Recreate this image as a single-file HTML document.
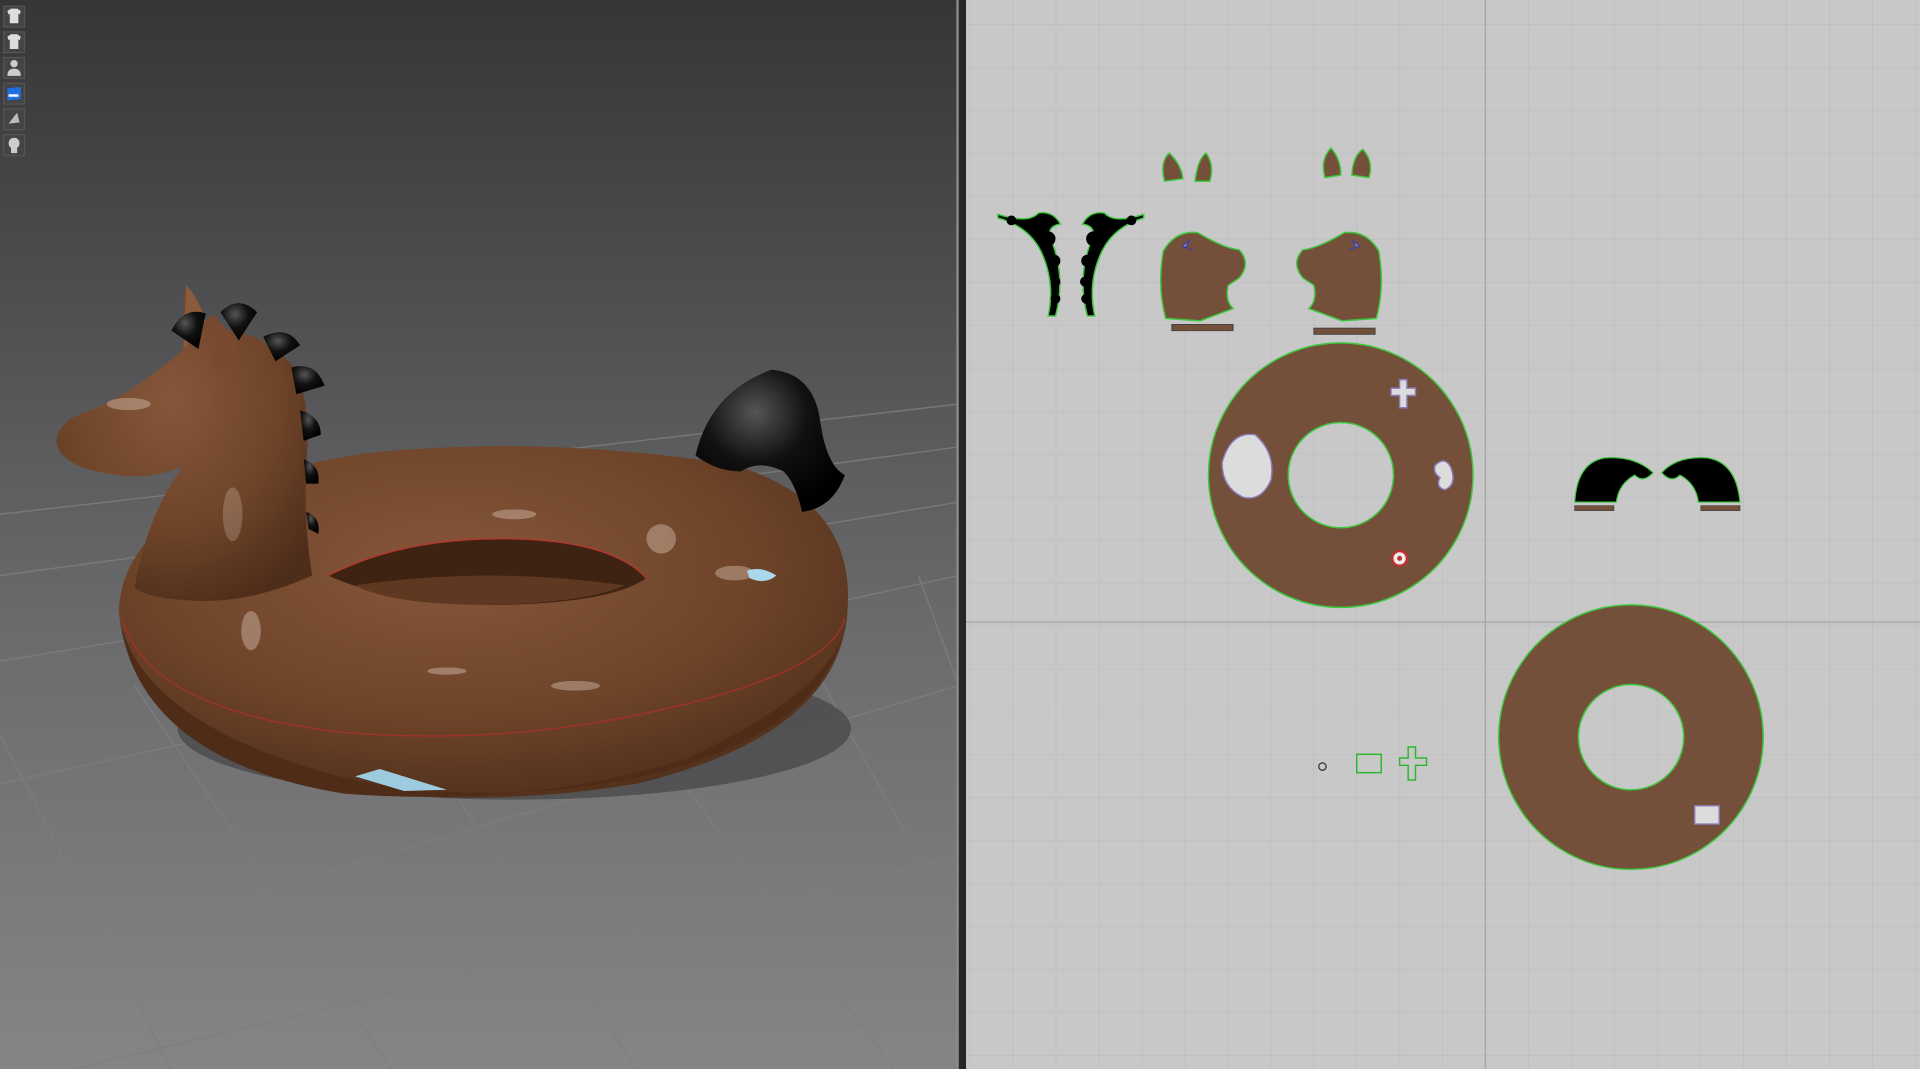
<!DOCTYPE html>
<html><head><meta charset="utf-8"><style>
html,body{margin:0;padding:0;width:1920px;height:1069px;overflow:hidden;background:#c8c8c8}
svg{display:block}
</style></head><body>
<svg width="1920" height="1069" viewBox="0 0 1568 873" preserveAspectRatio="none" xmlns="http://www.w3.org/2000/svg">
<defs>
<linearGradient id="bg" x1="0" y1="0" x2="0" y2="1">
<stop offset="0" stop-color="#363638"/><stop offset="0.35" stop-color="#555557"/><stop offset="0.6" stop-color="#6c6c6e"/><stop offset="1" stop-color="#858587"/>
</linearGradient>
<pattern id="grid" x="792" y="19.6" width="35.1" height="35.1" patternUnits="userSpaceOnUse">
<path d="M0 0H35.1M0 0V35.1" stroke="#b9b9b9" stroke-width="0.8" fill="none"/>
</pattern>
<radialGradient id="body" cx="0.45" cy="0.35" r="0.7">
<stop offset="0" stop-color="#86563a"/><stop offset="0.6" stop-color="#6e4429"/><stop offset="1" stop-color="#4e2e1a"/>
</radialGradient>
<radialGradient id="tail" cx="0.4" cy="0.3" r="0.7"><stop offset="0" stop-color="#555"/><stop offset="0.5" stop-color="#111"/><stop offset="1" stop-color="#000"/></radialGradient>
</defs>
<rect x="0" y="0" width="783" height="873" fill="url(#bg)"/>
<g stroke="#7e7e80" stroke-width="1.2" fill="none" opacity="0.8">
<path d="M0 420 L783 330 M0 470 L783 365 M0 540 L783 410 M0 640 L783 470 M0 790 L783 560 M60 873 L783 700"/>
<path d="M140 873 L0 600 M320 873 L110 560 M520 873 L300 540 M730 873 L470 520 M783 760 L640 500 M783 560 L750 470"/>
</g>
<g>
<rect x="3" y="5" width="17" height="17" fill="#444" stroke="#555"/><path d="M6 9 L9 7 L14 7 L17 9 L16 12 L15 11 L15 19 L8 19 L8 11 L7 12Z" fill="#ddd"/>
<rect x="3" y="26" width="17" height="17" fill="#444" stroke="#555"/><path d="M6 30 L9 28 L14 28 L17 30 L16 33 L15 32 L15 40 L8 40 L8 32 L7 33Z" fill="#ddd"/>
<rect x="3" y="47" width="17" height="17" fill="#444" stroke="#555"/><circle cx="11.5" cy="52" r="3" fill="#ccc"/><path d="M6 62 Q6 56 11.5 56 Q17 56 17 62Z" fill="#ccc"/>
<rect x="3" y="68" width="17" height="17" fill="#444" stroke="#555"/><path d="M6 72 L17 71 L17 81 L6 82Z" fill="#1e6fe0"/><rect x="7" y="77" width="8" height="2" fill="#fff"/>
<rect x="3" y="89" width="17" height="17" fill="#444" stroke="#555"/><path d="M7 101 L14 92 L16 100 Z" fill="#bbb"/>
<rect x="3" y="110" width="17" height="17" fill="#444" stroke="#555"/><circle cx="11.5" cy="117" r="4.5" fill="#ccc"/><rect x="9" y="120" width="5" height="5" fill="#ccc"/>
</g>
<ellipse cx="420" cy="595" rx="275" ry="58" fill="#444446" opacity="0.7"/>
<path d="M97 500 Q100 400 300 370 Q450 355 600 380 Q700 410 692 500 Q685 600 520 640 Q400 660 280 645 Q120 620 97 500Z" fill="url(#body)"/>
<path d="M97 500 Q110 590 280 635 Q400 660 520 635 Q680 600 692 500 Q690 560 560 620 Q430 660 280 648 Q110 620 97 500Z" fill="#4e2c18"/>
<path d="M268 470 Q330 438 420 440 Q500 442 528 472 Q500 492 410 494 Q320 494 268 470Z" fill="#3e2212"/>
<path d="M268 470 Q330 438 420 440 Q500 442 528 472" fill="none" stroke="#b03a30" stroke-width="1.2"/>
<path d="M290 478 Q400 462 510 478 Q480 492 400 494 Q320 494 290 478Z" fill="#5e3820"/>
<path d="M100 505 Q120 580 280 598 Q420 610 560 575 Q680 545 690 505" fill="none" stroke="#a8302a" stroke-width="1"/>
<g fill="#f0e0d0" opacity="0.35">
<ellipse cx="420" cy="420" rx="18" ry="4"/><ellipse cx="365" cy="548" rx="16" ry="3"/><ellipse cx="205" cy="515" rx="8" ry="16"/><ellipse cx="540" cy="440" rx="12" ry="12"/><ellipse cx="600" cy="468" rx="16" ry="6"/><ellipse cx="470" cy="560" rx="20" ry="4"/>
</g>
<path d="M610 466 Q622 462 634 470 Q625 478 612 472Z" fill="#a9d8ea"/>
<path d="M290 634 L310 628 L365 645 L330 646Z" fill="#9ccbe0"/>
<path d="M110 480 Q120 420 150 380 Q120 395 80 385 Q48 378 46 360 Q48 342 75 335 Q110 320 150 285 L150 240 Q158 232 168 262 Q178 250 180 270 Q215 270 240 300 Q255 330 250 380 Q248 430 255 470 Q200 495 150 490 Q120 488 110 480Z" fill="url(#body)"/>
<path d="M150 285 L152 233 Q160 240 168 262Z" fill="#8b5a3c"/>
<path d="M172 300 L178 262 Q196 275 195 305Z" fill="#7a4a2e"/>
<ellipse cx="190" cy="420" rx="8" ry="22" fill="#e8d0c0" opacity="0.25"/>
<ellipse cx="105" cy="330" rx="18" ry="5" fill="#f0e0d0" opacity="0.35"/>
<g fill="url(#tail)">
<path d="M140 270 Q150 250 168 256 L162 285Z"/><path d="M180 255 Q195 240 210 255 L195 278Z"/><path d="M215 275 Q235 265 245 282 L225 295Z"/><path d="M238 300 Q258 295 265 315 L242 322Z"/><path d="M245 335 Q262 340 262 355 L248 360Z"/><path d="M248 375 Q262 380 260 395 L250 395Z"/><path d="M250 418 Q262 422 260 436 L252 432Z"/>
</g>
<path d="M568 372 Q580 320 630 302 Q665 305 670 345 Q675 380 690 388 Q680 415 655 418 Q650 395 640 385 Q620 375 605 385 Q585 385 568 372Z" fill="url(#tail)"/>
<rect x="781" y="0" width="2" height="873" fill="#8a8a8a"/>
<rect x="783" y="0" width="6" height="873" fill="#262626"/>
<rect x="789" y="0" width="779" height="873" fill="#c8c8c8"/>
<rect x="789" y="0" width="779" height="873" fill="url(#grid)"/>
<line x1="1213" y1="0" x2="1213" y2="873" stroke="#a8a8a8" stroke-width="1.2"/>
<line x1="789" y1="508" x2="1568" y2="508" stroke="#a8a8a8" stroke-width="1.2"/>
<g stroke="#3cc83c" stroke-width="1.2">
<path fill="#74503a" fill-rule="evenodd" d="M1095 280 A108 108 0 1 1 1094.9 280Z M1095 345 A43 43 0 1 0 1095.1 345Z"/>
<path d="M998 378 Q1005 352 1025 355 Q1042 370 1038 392 Q1030 410 1015 406 Q998 398 998 378Z" fill="#dcdcdc" stroke="#8a7ab8"/>
<path d="M1143 310 h6 v7 h7 v6 h-7 v10 h-6 v-10 h-7 v-6 h7z" fill="#dcdcdc" stroke="#8a7ab8"/>
<path d="M1172 380 Q1180 372 1185 382 Q1190 396 1180 400 Q1172 398 1176 390 Q1170 386 1172 380Z" fill="#dcdcdc" stroke="#8a7ab8"/>
<circle cx="1143" cy="456" r="6" fill="#eee" stroke="#c03030" stroke-width="2"/><circle cx="1143" cy="456" r="2" fill="#c03030" stroke="none"/>
<path fill="#74503a" fill-rule="evenodd" d="M1332 494 A108 108 0 1 1 1331.9 494Z M1332 559 A43 43 0 1 0 1332.1 559Z"/>
<rect x="1384" y="658" width="20" height="15" fill="#dcdcdc" stroke="#8a7ab8"/>
<path d="M951 148 Q947 132 955 125 Q965 135 966 146Z" fill="#74503a"/>
<path d="M976 148 Q978 130 985 125 Q992 135 988 148Z" fill="#74503a"/>
<path d="M1082 145 Q1078 130 1087 121 Q1095 130 1095 143Z" fill="#74503a"/>
<path d="M1104 143 Q1105 127 1113 122 Q1122 132 1118 145Z" fill="#74503a"/>
<path d="M950 205 Q960 188 978 190 Q1000 203 1012 204 Q1022 215 1012 227 L1003 233 Q1000 245 1007 252 L980 262 L952 260 Q945 235 950 205Z" fill="#74503a"/>
<path d="M966 201 L972 196 L968 202 L974 204Z" fill="#ddd" stroke="#4040b0" stroke-width="1"/>
<rect x="957" y="265" width="50" height="5" fill="#74503a" stroke="#444" stroke-width="0.8"/>
<g transform="translate(2076 0) scale(-1 1)">
<path d="M950 205 Q960 188 978 190 Q1000 203 1012 204 Q1022 215 1012 227 L1003 233 Q1000 245 1007 252 L980 262 L952 260 Q945 235 950 205Z" fill="#74503a"/>
<path d="M966 201 L972 196 L968 202 L974 204Z" fill="#ddd" stroke="#4040b0" stroke-width="1"/>
<rect x="953" y="268" width="50" height="5" fill="#74503a" stroke="#444" stroke-width="0.8"/>
</g>
</g>
<g fill="#000" stroke="#3cc83c" stroke-width="1.2">
<path d="M815 178 Q840 185 850 205 Q862 230 856 258 L862 258 Q870 228 860 200 Q852 185 866 183 Q860 172 848 174 Q840 183 815 175Z"/>
<path d="M934 178 Q910 185 900 205 Q888 230 894 258 L888 258 Q880 228 890 200 Q898 185 884 183 Q890 172 902 174 Q910 183 934 175Z"/>
</g>
<g fill="#000">
<circle cx="856" cy="195" r="6"/><circle cx="861" cy="213" r="5"/><circle cx="862" cy="230" r="4"/><circle cx="862" cy="244" r="4"/><circle cx="826" cy="180" r="4"/>
<circle cx="893" cy="195" r="6"/><circle cx="888" cy="213" r="5"/><circle cx="886" cy="230" r="4"/><circle cx="887" cy="244" r="4"/><circle cx="924" cy="180" r="4"/>
</g>
<g fill="#000" stroke="#3cc83c" stroke-width="1">
<path d="M1286 410 Q1288 378 1310 374 Q1335 372 1350 386 Q1342 395 1335 388 Q1322 395 1320 410Z"/>
<path d="M1357 386 Q1370 372 1395 374 Q1418 378 1421 410 L1387 410 Q1385 395 1372 388 Q1365 395 1357 386Z"/>
</g>
<rect x="1286" y="413" width="32" height="4" fill="#74503a" stroke="#444" stroke-width="0.6"/>
<rect x="1389" y="413" width="32" height="4" fill="#74503a" stroke="#444" stroke-width="0.6"/>
<circle cx="1080" cy="626" r="3" fill="none" stroke="#333" stroke-width="1"/>
<rect x="1108" y="616" width="20" height="15" fill="none" stroke="#2cb82c" stroke-width="1.2"/>
<path d="M1150 610 h6 v9 h9 v6 h-9 v12 h-6 v-12 h-7 v-6 h7z" fill="none" stroke="#2cb82c" stroke-width="1.2"/>
</svg>
</body></html>
